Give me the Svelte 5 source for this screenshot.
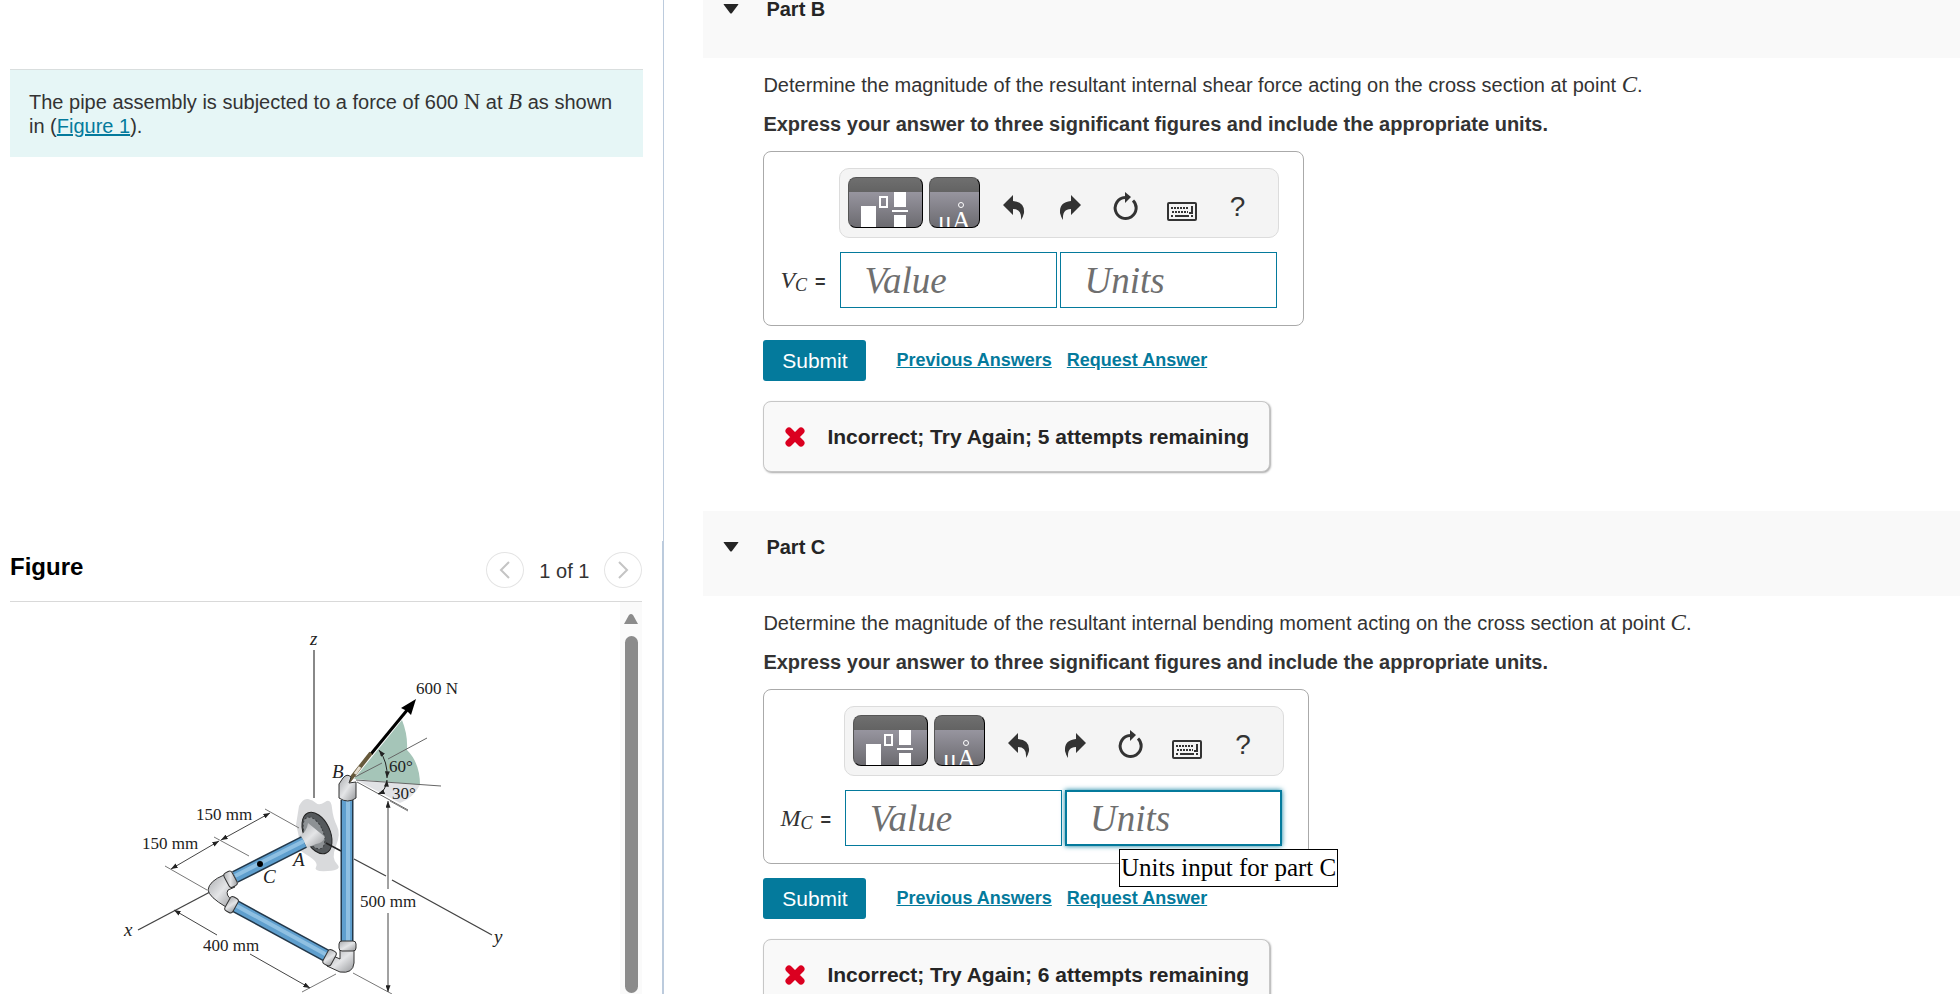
<script>
let parts = [
	{
		id: "B",
		symbol: "V",
		quantity: "shear force",
		attempts: 5,
		focused: false
	},
	{
		id: "C",
		symbol: "M",
		quantity: "bending moment",
		attempts: 6,
		focused: true
	}
];

let open = { B: true, C: true };

function toggle(id) {
	open[id] = !open[id];
}
</script>

<style>

:global(body) {
	margin: 0;
	font-family: "Liberation Sans", Arial, sans-serif;
	font-size: 20px;
	color: #333;
	background: #fff;
}

button {
	font-family: inherit;
	padding: 0;
	border: 0;
	background: none;
	cursor: pointer;
}

a {
	color: #047a9c;
	text-decoration: underline;
}

svg {
	display: block;
}

.page {
	display: flex;
	height: 100vh;
	overflow: hidden;
}

/* left side */

.left {
	flex: 0 0 34%;
	box-sizing: border-box;
	display: flex;
	flex-direction: column;
}

.intro {
	flex: 0 0 541px;
	box-sizing: border-box;
	padding: 69px 20px 0 10px;
	border-right: 1px solid #bccbdd;
	margin-right: 2px;
}

.problem {
	margin: 0;
	padding: 20px 19px 19px;
	line-height: 24px;
	background: #e6f6f6;
	border-top: 1px solid #d9dede;
}

.math {
	font-family: "Liberation Serif", "Times New Roman", serif;
	font-size: 23px;
	line-height: 20px;
}

.figure {
	flex: 1;
	min-height: 0;
	display: flex;
	flex-direction: column;
	padding: 0 20px 0 10px;
	border-right: 2px solid #bccbdd;
	margin-right: 2px;
}

.figureHeader {
	display: flex;
	align-items: center;
	justify-content: space-between;
	height: 60px;
	border-bottom: 1px solid #d9d9d9;
}

.figureHeader h2 {
	margin: 0;
	padding-bottom: 8px;
	font-size: 24px;
	line-height: 28px;
	color: #000;
}

.pager {
	display: flex;
	align-items: center;
	gap: 15px;
	padding-bottom: 3px;
}

.pager button {
	width: 38px;
	height: 36px;
	border: 1px solid #e4e4e4;
	border-radius: 50%;
	display: flex;
	align-items: center;
	justify-content: center;
}

.pager span {
	padding-top: 4px;
}

.viewer {
	flex: 1;
	min-height: 0;
	display: flex;
	justify-content: space-between;
}

.drawing {
	margin: 18px 0 0 90px;
	font-family: "Liberation Serif", "Times New Roman", serif;
	font-size: 17px;
}

.drawing .letter {
	font-style: italic;
	font-size: 19px;
}

.scroll {
	width: 22px;
	background: #fafafa;
	display: flex;
	flex-direction: column;
	align-items: center;
	gap: 12px;
	padding: 12px 0 1px;
	box-sizing: border-box;
}

.thumb {
	flex: 1;
	width: 13px;
	border-radius: 7px;
	background: #8b8b8b;
}

/* right side */

.right {
	flex: 1;
	min-width: 0;
	margin: -27px 0 0 37px;
}

.partHeader {
	height: 85px;
	margin-bottom: 15px;
	background: #f9f9f9;
}

.partHeader button {
	display: flex;
	align-items: center;
	gap: 27px;
	padding: 24px 20px 0;
	font-size: 20px;
	line-height: 24px;
	font-weight: bold;
	color: #252525;
}

.partBody {
	padding: 0 60px 39px;
}

.partBody p {
	margin: 0 0 15px;
	line-height: 24px;
}

.answer {
	display: table;
	margin-bottom: 14px;
	padding: 16px 24px 17px 16px;
	border: 1px solid #aaa;
	border-radius: 8px;
}

.answerGrid {
	display: grid;
	grid-template-columns: auto auto;
	column-gap: 13px;
	row-gap: 14px;
	align-items: center;
}

.toolbar {
	grid-column: 2;
	width: 440px;
	height: 70px;
	box-sizing: border-box;
	display: flex;
	align-items: flex-start;
	padding: 8px 12px 8px 8px;
	background: #f4f4f4;
	border: 1px solid #dcdcdc;
	border-radius: 10px;
}

.tool {
	flex: 1;
	height: 44px;
	display: flex;
	align-items: flex-end;
	justify-content: center;
	color: #333;
	font-size: 28px;
	line-height: 28px;
}

.dark {
	height: 51px;
	margin-right: 6px;
	box-sizing: border-box;
	border: 1px solid #000;
	border-color: #555 #000 #000 #555;
	border-radius: 8px;
	overflow: hidden;
	background: linear-gradient(#6f6f6f, #636363 14px, #97959f 14px, #6c6b70);
}

.symbol {
	padding-top: 2px;
	font-family: "Liberation Serif", "Times New Roman", serif;
	font-style: italic;
	font-size: 24px;
	line-height: 30px;
	white-space: nowrap;
}

.symbol sub {
	font-size: 18px;
	line-height: 0;
	vertical-align: -3px;
}

.symbol span {
	font-family: "Liberation Sans", Arial, sans-serif;
	font-style: normal;
	font-size: 18px;
	font-weight: bold;
	margin-left: 2px;
}

.fields {
	display: flex;
	gap: 3px;
	position: relative;
	padding-left: 1px;
}

.fields input {
	width: 217px;
	height: 56px;
	box-sizing: border-box;
	padding: 0 24px;
	border: 1px solid #047a9c;
	border-radius: 0;
	background: #fff;
	outline: 0;
	font-family: "Liberation Serif", "Times New Roman", serif;
	font-style: italic;
	font-size: 37px;
}

.fields input::placeholder {
	color: #6f6f6f;
	opacity: 1;
}

.fields input.focused {
	border-width: 2px;
	padding: 0 23px;
	box-shadow: 0 0 5px #047a9c;
}

.tooltip {
	position: absolute;
	top: 59px;
	left: 275px;
	padding: 3px 1px;
	border: 1px solid #000;
	background: #fff;
	color: #000;
	font-family: "Liberation Serif", "Times New Roman", serif;
	font-size: 25px;
	line-height: 30px;
	white-space: nowrap;
}

.actions {
	display: flex;
	align-items: center;
	margin-bottom: 20px;
	font-size: 18px;
	font-weight: bold;
}

.submit {
	width: 103px;
	height: 41px;
	margin-right: 30px;
	border-radius: 3px;
	background: #047a9c;
	color: #fff;
	font-size: 21px;
}

.actions a {
	margin-right: 15px;
}

.feedback {
	display: table;
	box-sizing: border-box;
	padding: 22px 20px 21px;
	border: 1px solid #c7c7c7;
	border-radius: 8px;
	background: #f9f9f9;
	box-shadow: 1px 1px 2px #aaa;
}

.feedback div {
	display: flex;
	align-items: center;
	gap: 21px;
	font-size: 21px;
	line-height: 26px;
	font-weight: bold;
	color: #252525;
}

</style>

<div class="page">
	<div class="left">
		<div class="intro">
			<p class="problem">
				The pipe assembly is subjected to a force of 600 <span class="math">N</span> at <i class="math">B</i> as shown in (<a href="#figure">Figure 1</a>).
			</p>
		</div>

		<div class="figure" id="figure">
			<div class="figureHeader">
				<h2>Figure</h2>
				<div class="pager">
					<button aria-label="Previous figure">
						<svg width="12" height="18" fill="none" stroke="#c4c4c4" stroke-width="2"><path d="M10 1L2 9l8 8" /></svg>
					</button>
					<span>1 of 1</span>
					<button aria-label="Next figure">
						<svg width="12" height="18" fill="none" stroke="#c4c4c4" stroke-width="2"><path d="M2 1l8 8-8 8" /></svg>
					</button>
				</div>
			</div>

			<div class="viewer">
				<svg class="drawing" width="420" height="374" viewBox="0 0 420 374" fill="#222" role="img" aria-label="Pipe assembly">
					<defs>
						<marker id="tip" viewBox="0 0 8 6" refX="8" refY="3" markerWidth="7" markerHeight="5" orient="auto-start-reverse" markerUnits="userSpaceOnUse">
							<path d="M0 0l8 3-8 3z" />
						</marker>
						<linearGradient id="metal" x1="0" x2="1" y1="0" y2="1">
							<stop offset="0" stop-color="#a9abae" />
							<stop offset="0.5" stop-color="#e4e5e7" />
							<stop offset="1" stop-color="#96989b" />
						</linearGradient>
					</defs>

					<!-- wall -->
					<path d="M199 186q4-8 9-7t8 4 9-1 7 6 5 18-1 20 1 18-9 7-12-4-9-12-9-10-2-20z" fill="#d9dadc" />

					<!-- axes -->
					<g stroke="#444" stroke-width="1.4" fill="none">
						<path d="M214 30v148" stroke="#888" stroke-width="2" />
						<path d="M38 310L110 272" />
						<path d="M254 239l32 17M292 260l100 55" />
					</g>

					<!-- force -->
					<path d="M254 159L302 100Q308 115 307 130Q320 143 320 165z" fill="#a5c5b8" />
					<path d="M256 160l64 5Q313 178 300 183z" fill="#e1e2e5" />
					<g stroke="#666" fill="none">
						<path d="M255 157l27-14M288 139l39-21M256 160l85 6M257 162l51 28" />
						<path d="M279 130Q288 142 287 158" stroke="#222" marker-start="url(#tip)" marker-end="url(#tip)" />
						<path d="M287 160Q286 171 278 174" stroke="#222" marker-start="url(#tip)" marker-end="url(#tip)" />
					</g>
					<path d="M271 134L308 89" stroke="#000" stroke-width="3" />
					<path d="M316 79l-5 16-4-4-6-3z" fill="#000" />
					<path d="M249 161l22-28" stroke="#67593b" stroke-width="4" />
					<path d="M255 154l5-7" stroke="#e6ded1" stroke-width="3" />

					<!-- dimensions -->
					<g stroke="#777" fill="none">
						<path d="M165 189l34 19M114 217l35 19M65 246l42 24" />
						<path d="M202 372l34-18M253 353l39 21M290 181l18 10" />
						<g stroke="#444">
							<path d="M170 193L121 220" marker-start="url(#tip)" marker-end="url(#tip)" />
							<path d="M119 221L71 249" marker-start="url(#tip)" marker-end="url(#tip)" />
							<path d="M117 315L74 290" marker-end="url(#tip)" />
							<path d="M150 334L210 368" marker-end="url(#tip)" />
							<path d="M288 269V181" marker-end="url(#tip)" />
							<path d="M288 293V372" marker-end="url(#tip)" />
						</g>
					</g>

					<!-- flange -->
					<g stroke="#222">
						<ellipse cx="217" cy="213" rx="13" ry="22" transform="rotate(-25 217 213)" fill="#55595c" />
						<ellipse cx="214" cy="213" rx="9" ry="17" transform="rotate(-25 214 213)" fill="#8d9194" stroke="#3b3e40" stroke-dasharray="2 2" />
					</g>
					<path d="M199 216q8-4 9-13l17 14q-2 6-9 7l-9 4z" fill="url(#metal)" />
					<path d="M226 223l15 8" stroke="#222" stroke-width="1.5" />

					<!-- pipes -->
					<g fill="none">
						<path d="M135 257L204 222M135 286l92 50M247 180v143" stroke="#23384a" stroke-width="13" />
						<path d="M135 257L204 222M135 286l92 50M247 180v143" stroke="#5f9fce" stroke-width="10" />
						<path d="M135 256L204 221M135 285l92 50M248 180v143" stroke="#8fc0e2" stroke-width="4" />
					</g>

					<!-- fittings -->
					<g fill="url(#metal)" stroke="#333">
						<path d="M124 255Q109 261 108 270Q109 277 126 287L132 280Q125 275 128 270L135 267z" />
						<rect x="-5" y="-8" width="9" height="16" rx="3" transform="translate(131 259) rotate(-28)" />
						<rect x="-5" y="-8" width="9" height="16" rx="3" transform="translate(132 285) rotate(29)" />
						<path d="M240 330v9l-9-4-4 11 13 6q13 2 14-9v-13z" />
						<rect x="239" y="321" width="17" height="10" rx="3" />
						<rect x="-5" y="-8" width="9" height="16" rx="3" transform="translate(230 338) rotate(28)" />
						<path d="M239 164l4-6q4-5 8-1l-2 6 7-1v16q-8 6-17 0z" />
					</g>

					<circle cx="160" cy="244" r="3" fill="#000" />

					<text class="letter" x="210" y="25">z</text>
					<text class="letter" x="24" y="316">x</text>
					<text class="letter" x="394" y="323">y</text>
					<text class="letter" x="232" y="158">B</text>
					<text class="letter" x="193" y="246">A</text>
					<text class="letter" x="163" y="263">C</text>
					<text x="316" y="74">600 N</text>
					<text x="289" y="152">60°</text>
					<text x="292" y="179">30°</text>
					<text x="96" y="200">150 mm</text>
					<text x="42" y="229">150 mm</text>
					<text x="103" y="331">400 mm</text>
					<text x="260" y="287">500 mm</text>
				</svg>

				<div class="scroll">
					<svg width="14" height="10" fill="#8b8b8b"><path d="M5 1q2-2 4 0l5 9H0z" /></svg>
					<div class="thumb"></div>
				</div>
			</div>
		</div>
	</div>

	<div class="right">
		{#each parts as part}
			<div class="partHeader">
				<button aria-expanded={open[part.id]} on:click={() => toggle(part.id)}>
					<svg width="16" height="10" fill="#252525"><path d="M1 0h14q1 0 0 1L9 9q-1 1-2 0L1 1Q0 0 1 0z" /></svg>
					Part {part.id}
				</button>
			</div>

			{#if open[part.id]}
				<div class="partBody">
					<p>Determine the magnitude of the resultant internal {part.quantity} acting on the cross section at point <i class="math">C</i>.</p>
					<p><b>Express your answer to three significant figures and include the appropriate units.</b></p>

					<div class="answer">
						<div class="answerGrid">
							<div class="toolbar">
								<button class="dark" aria-label="Templates">
									<svg width="73" height="49" fill="#fff">
										<path d="M12 28h15v21H12zM45 14h12v15H45zM43 32h16v2H43zM45 37h12v12H45z" />
										<path d="M31 19h7v10h-7z" fill="none" stroke="#fff" stroke-width="2" />
									</svg>
								</button>
								<button class="dark" aria-label="Symbols">
									<svg width="49" height="49" fill="#fff" font-family="Liberation Serif, serif" font-size="26">
										<text x="8" y="51">μA</text>
										<circle cx="31" cy="27" r="2.5" fill="none" stroke="#fff" />
									</svg>
								</button>
								<button class="tool" aria-label="Undo">
									<svg width="22" height="26" fill="#333"><path d="M0 10L10 0v6q12 1 11 12-1 4-3 7 1-11-8-11v6z" /></svg>
								</button>
								<button class="tool" aria-label="Redo">
									<svg width="22" height="26" fill="#333"><path d="M22 10L12 0v6Q0 7 1 18q1 4 3 7-1-11 8-11v6z" /></svg>
								</button>
								<button class="tool" aria-label="Reset">
									<svg width="26" height="29" viewBox="0 0 26 29">
										<path d="M20 8.500A10.500 10.500 0 1 1 12 5.500" fill="none" stroke="#333" stroke-width="3" />
										<path d="M12 0l6 5-6 6z" fill="#333" />
									</svg>
								</button>
								<button class="tool" aria-label="Keyboard shortcuts">
									<svg width="30" height="19" fill="none" stroke="#333" stroke-width="2">
										<rect x="1" y="1" width="28" height="17" rx="1" />
										<path d="M4 6h18M5 10h16" stroke-dasharray="2 1" />
										<path d="M8 14h14M25 4v7h-3M4 14h2M24 14h2" />
									</svg>
								</button>
								<button class="tool" aria-label="Help">?</button>
							</div>

							<label class="symbol" for="value{part.id}">{part.symbol}<sub>C</sub> <span>=</span></label>
							<div class="fields">
								<input type="text" id="value{part.id}" placeholder="Value">
								<input type="text" class:focused={part.focused} placeholder="Units" aria-label="Units input for part {part.id}">
								{#if part.focused}
									<div class="tooltip">Units input for part {part.id}</div>
								{/if}
							</div>
						</div>
					</div>

					<div class="actions">
						<button class="submit">Submit</button>
						<a href="#previous">Previous Answers</a>
						<a href="#request">Request Answer</a>
					</div>

					<div class="feedback">
						<div>
							<svg width="22" height="22" viewBox="0 0 22 22" stroke="#db0020" stroke-width="7" stroke-linecap="round"><path d="M5 5l12 12M17 5L5 17" /></svg>
							Incorrect; Try Again; {part.attempts} attempts remaining
						</div>
					</div>
				</div>
			{/if}
		{/each}
	</div>
</div>
